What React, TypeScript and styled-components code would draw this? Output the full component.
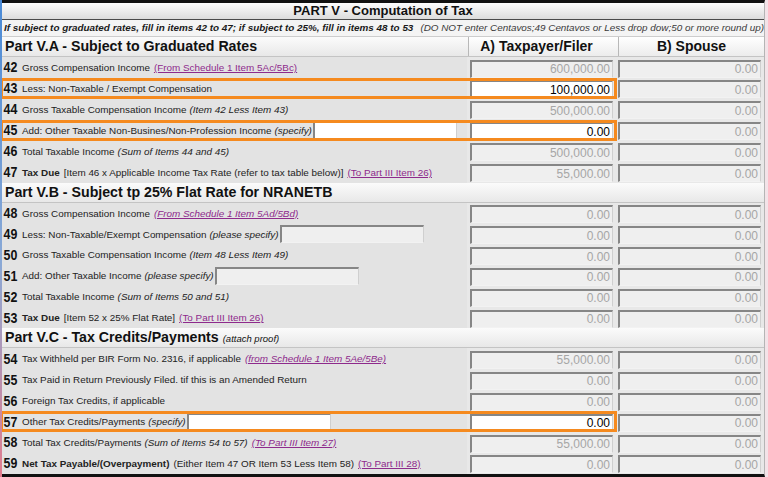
import React from "react";
import styled, { createGlobalStyle, css } from "styled-components";

const GlobalStyle = createGlobalStyle`
    html, body {
        margin: 0;
        padding: 0;
    }
    body {
        width: 768px;
        height: 477px;
        overflow: hidden;
        background: #f3e3e8;
        font-family: "Liberation Sans", Arial, sans-serif;
    }
`;

const Frame = styled.div`
    display: flex;
    height: 477px;
`;

const LeftEdge = styled.div`
    width: 2px;
    background: linear-gradient(#4a8ad6, #8aa9d6 55%, #e27c8d);
`;

const Panel = styled.div`
    width: 762px;
    display: flex;
    flex-direction: column;
    background: #e3e3e3;
    border-top: 3px solid #111;
    border-right: 1px solid #b5b5b5;
    border-bottom: 3px solid #111;
    overflow: hidden;
`;

const Title = styled.div`
    height: 16px;
    line-height: 16px;
    border-bottom: 1px solid #4a4a4a;
    background: linear-gradient(#fdfdfd, #dcdcdc);
    text-align: center;
    font-size: 13px;
    font-weight: bold;
    color: #111;
`;

const Instruction = styled.div`
    height: 16px;
    line-height: 16px;
    padding-left: 2px;
    border-bottom: 1px solid #cdcdcd;
    background: #f4f4f4;
    font-size: 9.9px;
    font-style: italic;
    white-space: nowrap;
    color: #1a1a1a;

    b {
        font-weight: bold;
    }
    span {
        color: #3a3a3a;
        margin-left: 7px;
    }
`;

const PartHeader = styled.div`
    display: flex;
    height: 19px;
    border-bottom: 1px solid #c4c4c4;
    background: linear-gradient(#fbfbfb, #e8e8e8);
`;

const PartTitle = styled.div`
    flex: 1;
    padding-left: 3px;
    line-height: 19px;
    font-size: 14.2px;
    font-weight: bold;
    color: #111;
    white-space: nowrap;

    i {
        font-size: 9.5px;
        font-weight: normal;
        margin-left: 4px;
    }
`;

const ColumnHead = styled.div<{ $width: number; $shift?: number }>`
    width: ${(props) => props.$width}px;
    padding-right: ${(props) => props.$shift ?? 0}px;
    box-sizing: border-box;
    border-left: 1px solid #b8b8b8;
    line-height: 19px;
    text-align: center;
    font-size: 14px;
    font-weight: bold;
    color: #111;
    background: linear-gradient(#ffffff, #ececec);
`;

const Row = styled.div`
    display: flex;
    height: 21px;
`;

const Main = styled.div<{ $highlight?: boolean }>`
    display: flex;
    position: relative;

    ${(props) =>
        props.$highlight &&
        css`
            &::after {
                content: "";
                position: absolute;
                top: 0;
                bottom: 0;
                left: -2px;
                right: 0;
                border: 3px solid #f58a1f;
                pointer-events: none;
            }
        `}
`;

const Label = styled.div`
    width: 465px;
    display: flex;
    align-items: center;
    font-size: 9.9px;
    color: #222;
    white-space: nowrap;
`;

const Num = styled.span`
    display: inline-block;
    width: 20px;
    flex: none;
    padding-left: 2px;
    font-size: 15.5px;
    font-weight: bold;
    color: #111;
    transform: scaleX(0.8);
    transform-origin: left center;
    margin-right: -2px;
`;

const Note = styled.i`
    margin-left: 3px;
`;

const Link = styled.a<{ $italic?: boolean }>`
    margin-left: 4px;
    color: #8e2a8c;
    text-decoration: underline;
    font-style: ${(props) => (props.$italic ? "italic" : "normal")};
`;

const Strong = styled.b`
    margin-right: 4px;
`;

const Cell = styled.div<{ $width: number; $left: number }>`
    width: ${(props) => props.$width}px;
    padding-left: ${(props) => props.$left}px;
    padding-top: 2px;
    box-sizing: border-box;
    background: #e8e8e8;
`;

const Field = styled.input<{ $editable?: boolean }>`
    box-sizing: border-box;
    width: 143px;
    height: 18px;
    margin: 0;
    padding: 0 2px 0 0;
    border-style: solid;
    border-width: 2px 1px 1px 2px;
    border-color: #868686 #cfcfcf #f2f2f2 #868686;
    background: ${(props) => (props.$editable ? "#ffffff" : "#efefef")};
    color: ${(props) => (props.$editable ? "#000000" : "#a6a6a6")};
    font-family: "Liberation Sans", Arial, sans-serif;
    font-size: 12px;
    text-align: right;
    outline: none;
`;

const Specify = styled.input<{ $editable?: boolean }>`
    box-sizing: border-box;
    width: 144px;
    height: 18px;
    margin: 0 0 0 1px;
    border-style: solid;
    border-width: 2px 1px 1px 2px;
    border-color: #868686 #cfcfcf #f2f2f2 #868686;
    background: ${(props) => (props.$editable ? "#ffffff" : "#efefef")};
    outline: none;
`;

type Line = {
    no: number;
    label: React.ReactNode;
    filer: string;
    editable?: boolean;
    specify?: boolean;
};

const partA: Line[] = [
    {
        no: 42,
        label: (
            <>
                Gross Compensation Income <Link>(From Schedule 1 Item 5Ac/5Bc)</Link>
            </>
        ),
        filer: "600,000.00",
    },
    { no: 43, label: "Less: Non-Taxable / Exempt Compensation", filer: "100,000.00", editable: true },
    {
        no: 44,
        label: (
            <>
                Gross Taxable Compensation Income <Note>(Item 42 Less Item 43)</Note>
            </>
        ),
        filer: "500,000.00",
    },
    {
        no: 45,
        label: (
            <>
                Add: Other Taxable Non-Busines/Non-Profession Income <Note>(specify)</Note>
            </>
        ),
        filer: "0.00",
        editable: true,
        specify: true,
    },
    {
        no: 46,
        label: (
            <>
                Total Taxable Income <Note>(Sum of Items 44 and 45)</Note>
            </>
        ),
        filer: "500,000.00",
    },
    {
        no: 47,
        label: (
            <>
                <Strong>Tax Due</Strong> [Item 46 x Applicable Income Tax Rate (refer to tax table below)]
                <Link>(To Part III Item 26)</Link>
            </>
        ),
        filer: "55,000.00",
    },
];

const partB: Line[] = [
    {
        no: 48,
        label: (
            <>
                Gross Compensation Income <Link $italic>(From Schedule 1 Item 5Ad/5Bd)</Link>
            </>
        ),
        filer: "0.00",
    },
    {
        no: 49,
        label: (
            <>
                Less: Non-Taxable/Exempt Compensation <Note>(please specify)</Note>
            </>
        ),
        filer: "0.00",
        specify: true,
    },
    {
        no: 50,
        label: (
            <>
                Gross Taxable Compensation Income <Note>(Item 48 Less Item 49)</Note>
            </>
        ),
        filer: "0.00",
    },
    {
        no: 51,
        label: (
            <>
                Add: Other Taxable Income <Note>(please specify)</Note>
            </>
        ),
        filer: "0.00",
        specify: true,
    },
    {
        no: 52,
        label: (
            <>
                Total Taxable Income <Note>(Sum of Items 50 and 51)</Note>
            </>
        ),
        filer: "0.00",
    },
    {
        no: 53,
        label: (
            <>
                <Strong>Tax Due</Strong> [Item 52 x 25% Flat Rate]
                <Link>(To Part III Item 26)</Link>
            </>
        ),
        filer: "0.00",
    },
];

const partC: Line[] = [
    {
        no: 54,
        label: (
            <>
                Tax Withheld per BIR Form No. 2316, if applicable{" "}
                <Link $italic>(from Schedule 1 Item 5Ae/5Be)</Link>
            </>
        ),
        filer: "55,000.00",
    },
    { no: 55, label: "Tax Paid in Return Previously Filed. tif this is an Amended Return", filer: "0.00" },
    { no: 56, label: "Foreign Tax Credits, if applicable", filer: "0.00" },
    {
        no: 57,
        label: (
            <>
                Other Tax Credits/Payments <Note>(specify)</Note>
            </>
        ),
        filer: "0.00",
        editable: true,
        specify: true,
    },
    {
        no: 58,
        label: (
            <>
                Total Tax Credits/Payments <Note>(Sum of Items 54 to 57)</Note>
                <Link $italic>(To Part III Item 27)</Link>
            </>
        ),
        filer: "55,000.00",
    },
    {
        no: 59,
        label: (
            <>
                <Strong>Net Tax Payable/(Overpayment)</Strong> (Either Item 47 OR Item 53 Less Item 58)
                <Link>(To Part III 28)</Link>
            </>
        ),
        filer: "0.00",
    },
];

const TaxRow: React.FC<{ line: Line }> = ({ line }) => (
    <Row>
        <Main $highlight={line.editable}>
            <Label>
                <Num>{line.no}</Num>
                {line.label}
                {line.specify && <Specify $editable={line.editable} readOnly />}
            </Label>
            <Cell $width={150} $left={3}>
                <Field $editable={line.editable} value={line.filer} readOnly />
            </Cell>
        </Main>
        <Cell $width={147} $left={1}>
            <Field value="0.00" readOnly />
        </Cell>
    </Row>
);

const App: React.FC = () => (
    <>
        <GlobalStyle />
        <Frame>
            <LeftEdge />
            <Panel>
                <Title>PART V - Computation of Tax</Title>
                <Instruction>
                    <b>
                        If subject to graduated rates, fill in items 42 to 47; if subject to 25%, fill in items 48 to 53
                    </b>
                    <span>(DO NOT enter Centavos;49 Centavos or Less drop dow;50 or more round up)</span>
                </Instruction>

                <PartHeader>
                    <PartTitle>Part V.A - Subject to Graduated Rates</PartTitle>
                    <ColumnHead $width={150} $shift={14}>
                        A) Taxpayer/Filer
                    </ColumnHead>
                    <ColumnHead $width={146}>B) Spouse</ColumnHead>
                </PartHeader>
                {partA.map((line) => (
                    <TaxRow key={line.no} line={line} />
                ))}

                <PartHeader>
                    <PartTitle>Part V.B - Subject tp 25% Flat Rate for NRANETB</PartTitle>
                </PartHeader>
                {partB.map((line) => (
                    <TaxRow key={line.no} line={line} />
                ))}

                <PartHeader>
                    <PartTitle>
                        Part V.C - Tax Credits/Payments<i>(attach proof)</i>
                    </PartTitle>
                </PartHeader>
                {partC.map((line) => (
                    <TaxRow key={line.no} line={line} />
                ))}
            </Panel>
        </Frame>
    </>
);

export default App;
